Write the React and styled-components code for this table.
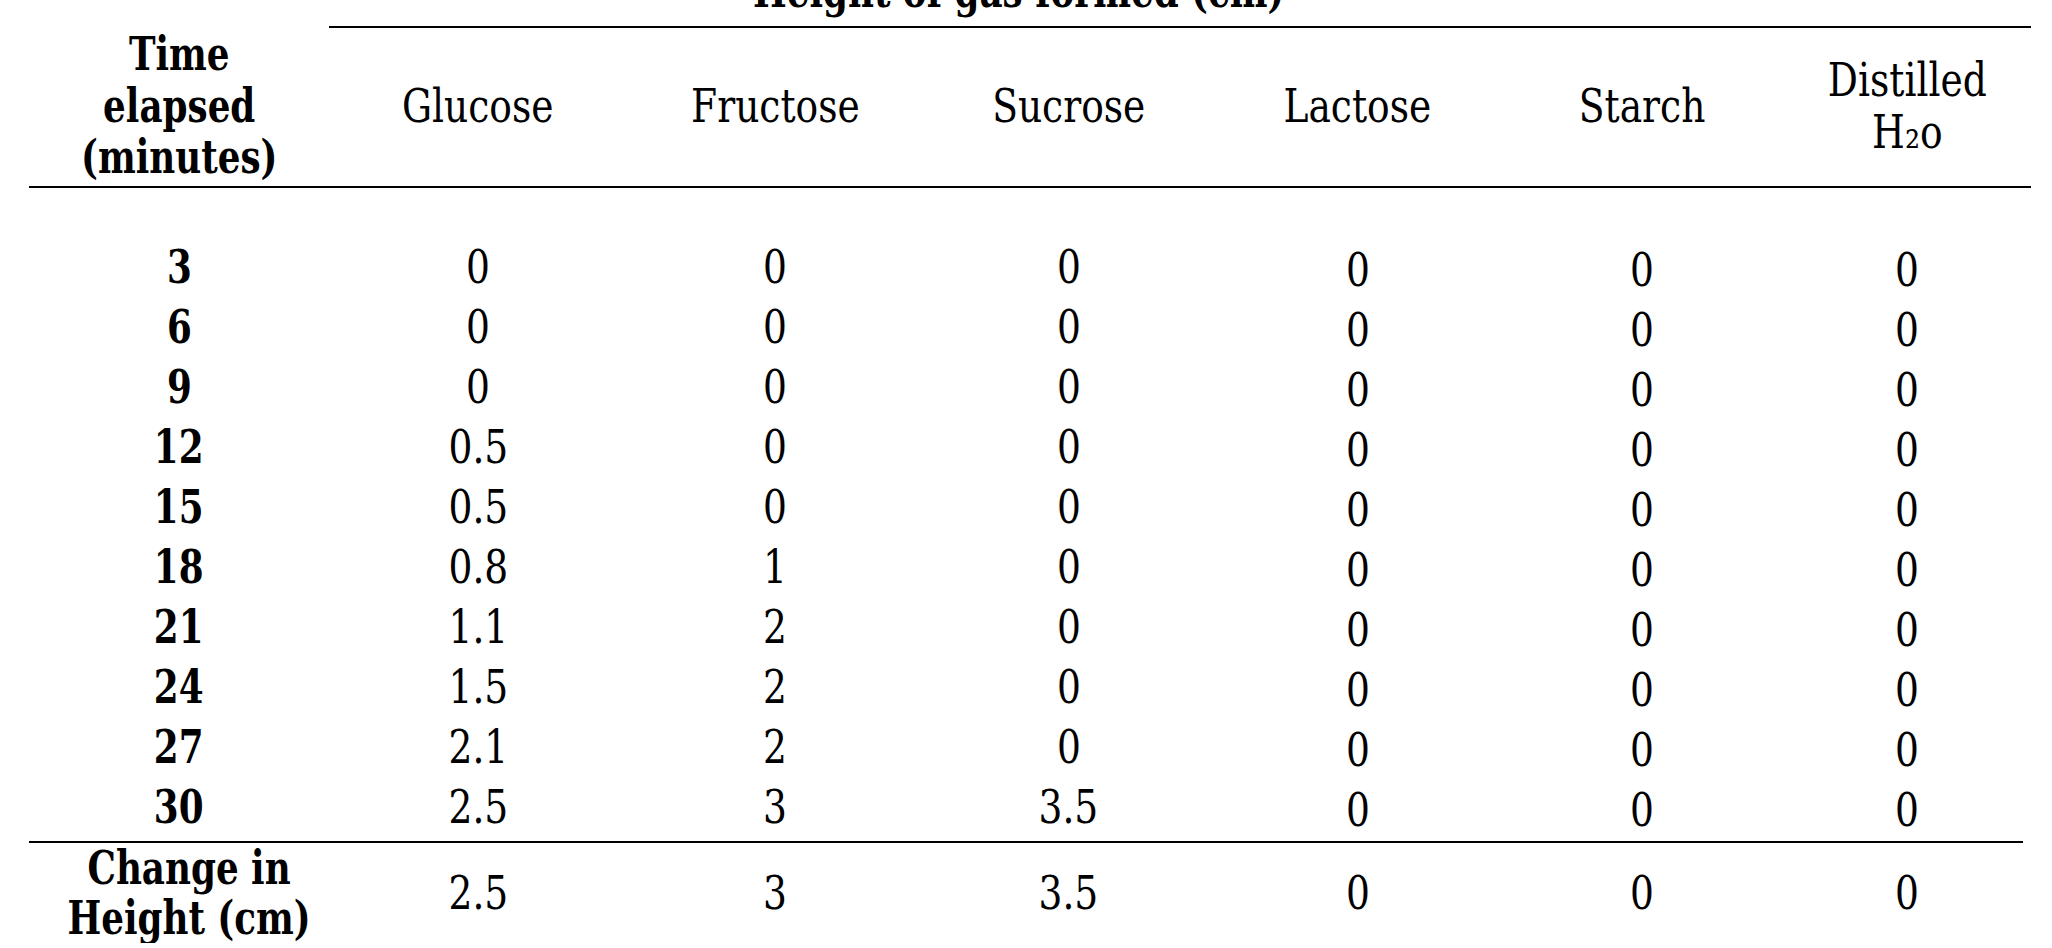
import React from "react";
import styled, { createGlobalStyle } from "styled-components";

const columns = "300px 298px 296px 291px 287px 282px 248px";

const sugars = ["Glucose", "Fructose", "Sucrose", "Lactose", "Starch"];

const rows = [
  ["3", "0", "0", "0", "0", "0", "0"],
  ["6", "0", "0", "0", "0", "0", "0"],
  ["9", "0", "0", "0", "0", "0", "0"],
  ["12", "0.5", "0", "0", "0", "0", "0"],
  ["15", "0.5", "0", "0", "0", "0", "0"],
  ["18", "0.8", "1", "0", "0", "0", "0"],
  ["21", "1.1", "2", "0", "0", "0", "0"],
  ["24", "1.5", "2", "0", "0", "0", "0"],
  ["27", "2.1", "2", "0", "0", "0", "0"],
  ["30", "2.5", "3", "3.5", "0", "0", "0"],
];

const totals = ["2.5", "3", "3.5", "0", "0", "0"];

function App() {
  return (
    <Page>
      <GlobalStyle />
      <Table>
        <TitleRow>
          <div />
          <Title>
            <Text $bold>Height of gas formed (cm)</Text>
          </Title>
        </TitleRow>

        <HeaderRow>
          <HeadCell $bold>
            <Text $bold>
              Time
              <br />
              elapsed
              <br />
              (minutes)
            </Text>
          </HeadCell>
          {sugars.map((name) => (
            <HeadCell key={name}>
              <Text>{name}</Text>
            </HeadCell>
          ))}
          <HeadCell>
            <Text>
              Distilled
              <br />
              H₂o
            </Text>
          </HeadCell>
        </HeaderRow>

        <Body>
          {rows.map(([time, ...values]) => (
            <DataRow key={time}>
              <Cell $bold>
                <Text $bold>{time}</Text>
              </Cell>
              {values.map((v, i) => (
                <Cell key={i}>
                  <Text $drop={i >= 3 ? 3 : 0}>{v}</Text>
                </Cell>
              ))}
            </DataRow>
          ))}
        </Body>

        <FinalRow>
          <Cell $bold>
            <Text $bold>
              Change in
              <br />
              Height (cm)
            </Text>
          </Cell>
          {totals.map((v, i) => (
            <Cell key={i}>
              <Text>{v}</Text>
            </Cell>
          ))}
        </FinalRow>
      </Table>
    </Page>
  );
}

const GlobalStyle = createGlobalStyle`
  html, body {
    margin: 0;
    background: #ffffff;
  }
  body {
    font-family: "DejaVu Serif", "Liberation Serif", serif;
    color: #000000;
  }
`;

const Page = styled.div`
  padding-left: 29px;
`;

const Table = styled.div`
  width: 2002px;
  margin-top: -35px;
  font-size: 47px;
`;

const Row = styled.div`
  display: grid;
  grid-template-columns: ${columns};
  align-items: center;
`;

const TitleRow = styled(Row)``;

const Title = styled.div`
  grid-column: 2 / -1;
  text-align: center;
  font-weight: bold;
  line-height: 51px;
  white-space: nowrap;
  padding: 0 322px 10px 0;
  border-bottom: 2px solid #000;
`;

const HeaderRow = styled(Row)`
  height: 160px;
  box-sizing: border-box;
  padding-bottom: 3px;
  border-bottom: 2px solid #000;
`;

const HeadCell = styled.div`
  text-align: center;
  line-height: 51.5px;
  white-space: nowrap;
  font-weight: ${({ $bold }) => ($bold ? "bold" : "normal")};
`;

const Body = styled.div`
  padding: 49px 0 4px;
`;

const DataRow = styled(Row)`
  height: 60px;
  line-height: 60px;
`;

const Cell = styled.div`
  text-align: center;
  white-space: nowrap;
  font-weight: ${({ $bold }) => ($bold ? "bold" : "normal")};
`;

const FinalRow = styled(Row)`
  margin-right: 8px;
  height: 100px;
  line-height: 50px;
  border-top: 2px solid #000;
`;

const Text = styled.span`
  display: inline-block;
  transform: scaleX(${({ $bold }) => ($bold ? 0.76 : 0.8)})
    translateY(${({ $drop }) => $drop || 0}px);
  transform-origin: center;
`;

export default App;
